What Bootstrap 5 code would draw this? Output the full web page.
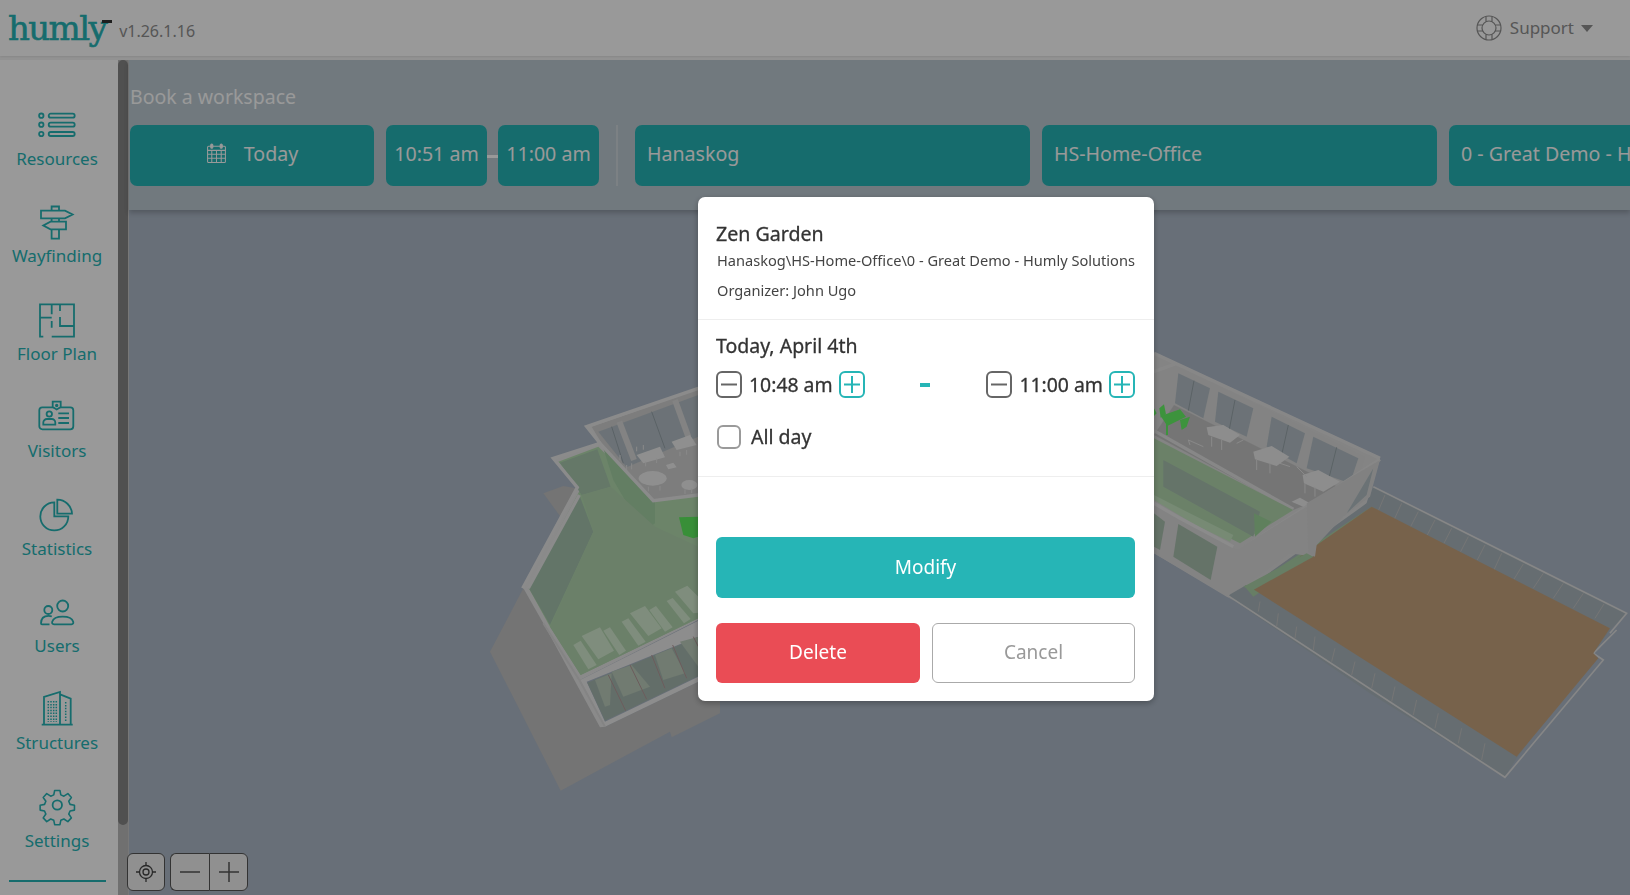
<!DOCTYPE html>
<html lang="en">
<head>
<meta charset="utf-8">
<title>Humly</title>
<link rel="stylesheet" href="https://cdn.jsdelivr.net/npm/bootstrap@5.3.0/dist/css/bootstrap.min.css">
<style>
html,body{height:100%}
body{font-family:"Noto Sans",sans-serif;overflow:hidden;background:#f4f4f4;color:#333}
.app-head{height:56px;background:#fff;margin-bottom:4px;padding:0 37px 0 8px;box-shadow:0 1px 2px rgba(0,0,0,.08)}
.logo-text{font-family:"DejaVu Serif",serif;font-size:34px;line-height:1;color:#26b5b6;letter-spacing:-1.6px;position:relative;-webkit-text-stroke:.6px #26b5b6}
.logo-dash{position:absolute;right:-6px;top:9px;width:10px;height:3px;background:#333}
.ver{font-size:16px;color:#8f8f8f;margin-left:13px;margin-top:5px}
.sup{font-size:17px;color:#8f8f8f}
.sup-caret{width:0;height:0;border-left:6.5px solid transparent;border-right:6.5px solid transparent;border-top:7px solid #8f8f8f;margin-left:7px}
.app-body{height:835px;overflow:hidden}
.side{width:118px;background:#fff;flex:none;overflow:hidden;height:835px;padding:45px 4px 0 0}
.side-item{height:97.4px;flex:none;color:#26b5b6;font-size:17px;line-height:24px;text-decoration:none}
.side-item svg{width:40px;height:40px;display:block;margin:0 auto 2px;stroke:#26b5b6;fill:none;stroke-width:1.8}
.side-rule{width:97px;height:2px;background:#26b5b6;margin:-4px auto 0;flex:none}
.bar-track{width:10px;background:#bbb;flex:none}
.bar-thumb{height:765px;background:#858585;border-radius:5px}
.stage{background:#adb9c8;min-width:0;border-left:1px solid #c9c9c9}
.book{height:150px;background:#bdcad3;padding:24px 0 0 1px;box-shadow:0 3px 5px rgba(0,0,0,.2);position:relative;z-index:2}
.book-title{font-size:19.5px;line-height:26px;color:#fff;margin-bottom:15px}
.pick{background:#26b5b6;color:#fff;border-radius:7px;height:61px;font-size:19.6px;line-height:26px;white-space:nowrap;flex:none;overflow:hidden;padding:0 12px 4px;border:0}
.pick-day{width:244px;text-align:center;padding-left:12px}
.pick-time{width:101px;padding:0 0 4px;text-align:center}
.pick-wide{width:395px;margin-right:12px}
.pick-cal{width:21px;height:21px;margin-right:17px;vertical-align:-3px}
.pick-gap{width:12px;flex:none}
.dash-time{width:11px;height:3px;background:#fff;align-self:center;flex:none;margin-top:1px}
.vrule{width:2px;height:61px;background:#cfd7dd;margin:0 17px 0 17px;flex:none}
.floor{position:absolute;left:0;top:0;width:1630px;height:895px;z-index:1}
.mapctl{position:absolute;left:127px;top:853px;z-index:3;gap:5px}
.mapbtn{width:38px;height:38px;background:#f0f0f0;border:1.5px solid #555;border-radius:6px;padding:0;display:flex;align-items:center;justify-content:center}
.mapgrp .mapbtn{width:39px}
.mapgrp .mapbtn:first-child{border-radius:6px 0 0 6px;border-right:0}
.mapgrp .mapbtn:last-child{border-radius:0 6px 6px 0}
.humly-back{--bs-backdrop-opacity:.4}
.modal.humly-modal{display:block}
.humly-modal .modal-dialog{max-width:456px;margin:197px 0 0 698px}
.humly-modal .modal-content{height:504px;border:0;border-radius:7px;box-shadow:0 2px 6px rgba(0,0,0,.3);color:#333;display:block}
.mhead{height:123px;padding:23px 18px 0;border-bottom:1px solid #eee}
.mtitle{font-size:19.6px;line-height:28px;color:#333;-webkit-text-stroke:.3px #333}
.msub{font-size:14.6px;line-height:20px;color:#444;white-space:nowrap;padding-left:1px;margin-top:2px}
.msub+.msub{margin-top:10px}
.mtime{height:157px;padding:12px 18px 0;border-bottom:1px solid #eee}
.mday{font-size:19.5px;line-height:27px;color:#333;-webkit-text-stroke:.3px #333}
.tline{margin-top:12px;height:27px;padding-right:1px}
.tval{font-size:19.4px;line-height:27px;white-space:nowrap;color:#333;margin-left:7px;margin-right:6px;-webkit-text-stroke:.3px #333}
.tbtn{width:26px;height:27px;border-radius:6px;border:2px solid #666;background:#fff;padding:0;flex:none;display:flex}
.tbtn svg{width:100%;height:100%}
.tbtn.on{border-color:#26b5b6}
.tdash{width:10px;height:4px;background:#26b5b6;flex:none;margin-left:55px}
.tspace{margin-left:auto}
.allday{margin-top:26px}
.allday .form-check-input{width:24px;height:24px;border-radius:6px;border:2px solid #9a9a9a;margin:0 10px 0 1px;float:none;flex:none}
.allday label{font-size:19.5px;line-height:26px;color:#333;-webkit-text-stroke:.3px #333}
.mfoot{padding:60px 19px 0 18px}
.act{height:60px;border-radius:6px;font-size:19px;border:0;color:#fff;padding-bottom:8px}
.act-mod{background:#26b5b6;width:100%;height:61px;margin-bottom:25px;padding-bottom:6px}
.act-del{background:#ea4c55;width:204px}
.act-can{background:#fff;border:1px solid #aaa;color:#999;width:203px}
</style>
</head>
<body>
<header class="app-head d-flex align-items-center">
  <span class="logo-text">humly<span class="logo-dash"></span></span>
  <span class="ver">v1.26.1.16</span>
  <div class="sup ms-auto d-flex align-items-center">
    <svg width="26" height="26" viewBox="0 0 26 26" fill="none" stroke="#8f8f8f" stroke-width="1.2" class="me-2"><circle cx="13" cy="13" r="12"/><circle cx="13" cy="13" r="7"/><path d="M10 1.5v5M16 1.5v5M10 19.5v5M16 19.5v5M1.5 10h5M1.5 16h5M19.5 10h5M19.5 16h5"/></svg>
    <span>Support</span><span class="sup-caret"></span>
  </div>
</header>
<div class="app-body d-flex">
  <nav class="side d-flex flex-column text-center">
    <a class="side-item d-block"><svg viewBox="0 0 40 40"><circle cx="4.3" cy="10.7" r="2.2"/><circle cx="4.3" cy="19.7" r="2.2"/><circle cx="4.3" cy="29" r="2.2"/><rect x="11.7" y="8.7" width="26" height="4" rx="2"/><rect x="11.7" y="17.7" width="26" height="4" rx="2"/><rect x="11.7" y="27" width="26" height="4" rx="2"/></svg>Resources</a>
    <a class="side-item d-block"><svg viewBox="0 0 40 40"><path d="M14.6 8.6V4.5h7.4v4.1M4 8.6h24l7.6 3.9-7.6 3.8H4zM14.6 16.3v3.4M22 16.3v3.4M29 19.7H13.5l-7.2 3.8 7.2 3.8H29zM14.6 27.3v9.4H22v-9.4"/></svg>Wayfinding</a>
    <a class="side-item d-block"><svg viewBox="0 0 40 40" stroke-width="2"><path d="M6.3 36.7H3V4.3h34v32.400H14.7M14.7 4.300v10M3 17.700h11.700M14.700 21v6.700M23 4.300V11M23 17v9h14"/></svg>Floor Plan</a>
    <a class="side-item d-block"><svg viewBox="0 0 40 40"><rect x="2.3" y="10.3" width="34" height="22" rx="3"/><path d="M15.7 4.7h8V10l-4 2.5-4-2.5z" fill="#fff"/><circle cx="19.7" cy="8.5" r=".8"/><circle cx="12.3" cy="17" r="2.7"/><path d="M6.3 27.7v-2.2c0-2 2-3.500 3.500-3.500h5c1.700 0 3.500 1.500 3.500 3.500v2.200zM21.300 16.300H32M21.300 21H32M21.300 26H32"/></svg>Visitors</a>
    <a class="side-item d-block"><svg viewBox="0 0 40 40"><path d="M17.300 7.400A14 14 0 1 0 31.300 21.400H17.300zM20.300 4.700V18.700H35A14.700 14.700 0 0 0 20.300 4.700z"/></svg>Statistics</a>
    <a class="side-item d-block"><svg viewBox="0 0 40 40"><circle cx="25.700" cy="14" r="5.500"/><path d="M17 32.300h17.500c1.500 0 2.100-1 1.700-2.500-1-3.500-5-5.100-10.500-5.100s-9.500 1.600-10.500 5.100c-.4 1.500.1 2.500 1.800 2.500z"/><circle cx="11.300" cy="18" r="4"/><path d="M4 31.300c0-4.800 3-7.500 7.500-7.500 1.300 0 2.400.2 3.300.7M4 31.300c0 .6.400 1 1 1h7.500"/></svg>Users</a>
    <a class="side-item d-block"><svg viewBox="0 0 40 40"><path d="M4.700 35.600h31M7 35.600V7.900l16-5v32.700M23.700 5.600l10 4v26"/><path d="M11.300 12v21M14 12v21M16.700 12v21M19.300 12v21M28.700 13v19" stroke-width="1.500" stroke-dasharray="1.500 1.400"/></svg>Structures</a>
    <a class="side-item d-block"><svg viewBox="0 0 40 40"><circle cx="20.300" cy="18" r="4.700"/><path d="M17 3.500h6l1 5 3.500 1.500 4.500-3 4 4.500-3 4.300 1.500 3.500 5 .9v5.600l-5 1-1.500 3.500 3 4.300-4 4.300-4.500-3-3.500 1.500-1 5h-6l-1-5-3.500-1.500-4.500 3-4-4.300 3-4.300-1.500-3.500-5-1v-5.600l5-.9 1.500-3.500-3-4.300 4-4.500 4.500 3 3.500-1.500z" transform="translate(2.700 .4) scale(.88)" stroke-linejoin="round"/></svg>Settings</a>
    <div class="side-rule"></div>
  </nav>
  <div class="bar-track"><div class="bar-thumb"></div></div>
  <main class="stage flex-grow-1">
    <section class="book">
      <div class="book-title">Book a workspace</div>
      <div class="d-flex">
        <button class="pick pick-day"><svg class="pick-cal" viewBox="0 0 20 20" fill="none" stroke="#fff" stroke-width="1"><rect x="1.500" y="3" width="17" height="15.500" rx="1"/><path d="M1.500 7h17M1.500 10.700h17M1.500 14.500h17M5.500 7v11.500M10 7v11.500M14.500 7v11.500"/><rect x="4.500" y="1" width="2" height="4" rx="1" fill="#fff"/><rect x="13.500" y="1" width="2" height="4" rx="1" fill="#fff"/></svg>Today</button>
        <span class="pick-gap"></span>
        <button class="pick pick-time">10:51 am</button>
        <span class="dash-time"></span>
        <button class="pick pick-time">11:00 am</button>
        <span class="vrule"></span>
        <button class="pick pick-wide text-start">Hanaskog</button>
        <button class="pick pick-wide text-start">HS-Home-Office</button>
        <button class="pick pick-wide text-start">0 - Great Demo - Humly Solutions</button>
      </div>
    </section>
  </main>
</div>

<svg class="floor" viewBox="0 0 1630 895" aria-hidden="true">
  <g transform="translate(480 380) scale(.3333)">
    <polygon points="190,340 250,318 290,325 245,415" fill="#c1c1c1"/>
    <polygon points="30,815 130,625 300,885 375,1040 655,905 720,860 720,1000 575,1072 570,1055 242,1232" fill="#c1c1c1"/>
    <polygon points="130,625 292,322 220,235 360,190 320,140 655,25 655,345 520,365 655,345 655,720 300,900 375,1040 360,1042 190,730" fill="#e6e6e6"/>
    <polygon points="145,622 300,330 235,245 355,200 520,365 655,345 655,715 302,885 210,740" fill="#b4dcb0"/>
    <polygon points="145,622 298,345 340,455 210,735" fill="#a6c4ae"/>
    <polygon points="240,248 352,208 392,320 305,345" fill="#a8c8ae"/>
    <polygon points="370,205 525,365 525,430 490,455 400,300" fill="#a5d2a5"/>
    <polygon points="305,345 392,320 525,440 655,500 655,715 302,885 210,740 340,455" fill="#b3d5b0"/>
    <polygon points="597,412 655,410 655,470 640,475 610,465" fill="#5eee5e"/>
    <g fill="#d4ecd0">
      <polygon points="280,795 302,782 350,855 325,868"/><polygon points="305,768 360,742 402,812 355,838"/><polygon points="370,752 390,742 438,812 418,825"/>
      <polygon points="425,725 445,715 497,785 475,797"/><polygon points="450,700 495,678 545,745 505,768"/><polygon points="508,690 528,678 578,742 555,755"/>
      <polygon points="560,663 578,654 632,717 612,730"/><polygon points="585,635 622,617 655,650 655,698 640,700"/>
    </g>
    <polygon points="335,140 655,28 655,345 520,362 365,190" fill="#d0d0d0"/>
    <polygon points="355,155 655,45 655,170 440,262" fill="#b4bfc6"/>
    <g stroke="#dadada" stroke-width="18"><path d="M418 125 462 240M585 60 625 170"/></g>
    <g stroke="#97a3aa" stroke-width="3"><path d="M395 140 430 250M515 95 555 205"/></g>
    <g fill="#efefef">
      <polygon points="470,225 540,200 555,232 490,250"/><ellipse cx="518" cy="295" rx="42" ry="22"/><ellipse cx="628" cy="315" rx="24" ry="15"/><polygon points="575,185 630,165 650,195 590,210"/><polygon points="558,255 580,248 590,262 565,268"/>
    </g>
    <g stroke="#e6e6e6" stroke-width="3" fill="none"><path d="M440 255v18M455 250v18M497 245v14M530 235v14M600 215v14M620 210v14M470 200v14M490 195v14M505 320v14M540 318v14M615 328v14M635 325v14M420 225v16"/></g>
    <path d="M128 625 292 322 220 235 360 190 320 140 655 25M360 190 520 362 655 345M145 625 298 345" fill="none" stroke="#e8e8e8" stroke-width="10"/>
    <polygon points="300,900 655,722 655,770 320,905 375,1025 655,890 655,905 375,1040" fill="#ececec"/>
    <polygon points="322,908 655,772 655,888 375,1022" fill="#a6b8b0"/>
    <g fill="#bccdbc"><polygon points="345,900 395,880 390,975 375,980"/><polygon points="395,875 455,855 510,920 430,950"/><polygon points="525,825 575,805 615,880 550,900"/><polygon points="600,785 655,770 655,860"/></g>
    <g stroke="#b59a9a" stroke-width="3" fill="none"><path d="M385 885 437 992M450 855 500 958M515 825 555 925M578 795 620 895M640 770 655 800"/></g>
    <path d="M190 730 298 900 375 1040" fill="none" stroke="#dcdcdc" stroke-width="6"/>
  </g>
  <g transform="translate(1140 340) scale(.3333)">
    <polygon points="42,40 720,355 680,490 530,640 300,790 260,770 42,640" fill="#dcdcdc"/>
    <polygon points="42,95 105,75 675,350 642,465 460,505 42,285" fill="#dadada"/>
    <polygon points="42,285 102,195 642,465 660,440 510,490 460,510" fill="#c4c4c4"/>
    <g fill="#b4bfc6">
      <polygon points="115,100 210,145 190,235 105,190"/><polygon points="235,155 340,205 320,290 225,245"/><polygon points="395,230 495,280 470,370 380,320"/><polygon points="520,290 655,355 630,430 500,385"/>
    </g>
    <g stroke="#98a4aa" stroke-width="3"><path d="M162 122 145 212M285 180 268 268M445 255 425 345M590 322 568 410"/></g>
    <g stroke="#e2e2e2" stroke-width="10"><path d="M42 40 720 355M42 95 105 72M720 358 300 630M42 272 460 508"/></g>
    <polygon points="42,295 460,510 300,610 42,480" fill="#b3d8ae"/>
    <polygon points="70,360 360,515 340,590 70,440" fill="#a8c2b0"/>
    <polygon points="342,520 395,545 345,590" fill="#9fd69c"/>
    <polygon points="42,465 130,510 280,585 270,605 135,540 42,485" fill="#c6e6c2"/>
    <g fill="#ececec"><polygon points="200,262 250,255 300,285 270,308 205,285"/><polygon points="340,335 395,318 448,350 410,378 345,358"/><polygon points="488,405 535,390 600,425 550,455 492,430"/><polygon points="455,485 480,473 510,490 490,500"/></g>
    <g stroke="#e4e4e4" stroke-width="3" fill="none"><path d="M145 300l45 20M150 315l-5-15M420 370l30 10M470 380l30 30M290 310l20-10M215 290v30M245 300v30M350 360v30M390 370v30M495 430v30M525 440v30"/></g>
    <g fill="#66f566"><polygon points="62,228 120,208 138,230 82,258"/><path d="M58 205l14-12 6 30-16 10zM42 205l8 15-8 8zM120 240l30-10-10 30-15 10z"/><path d="M78 250h6v35h-6z"/></g>
    <polygon points="700,440 1460,820 1410,870 1130,1255 1095,1310 1020,1265 690,1060 265,770 275,720 330,740 680,490" fill="#aab6bc"/>
    <polygon points="330,740 695,500 720,515 340,770 310,735" fill="#acd2a8"/>
    <path d="M700 440 1460 820 1410 880M1430 870 1360 940 1390 960 1095 1312 265 768 275 718" fill="none" stroke="#dfdfdf" stroke-width="5"/>
    <g stroke="#c4c4c4" stroke-width="3" fill="none"><path d="M735 465 712 520M785 490 762 540M835 515 812 560M885 540 862 585M935 565 912 610M985 590 962 635M1035 615 1012 660M1085 640 1062 690M1150 672 1122 718M1210 700 1180 745M1270 730 1240 775M1330 760 1300 805M1392 792 1365 835M360 785 355 815M415 820 410 860M470 860 465 895M525 890 520 930M585 925 575 965M645 965 635 1005M705 1000 695 1045M765 1040 755 1085M830 1080 820 1125M895 1120 885 1165M965 1165 955 1210M1035 1210 1025 1260"/></g>
    <polygon points="340,748 695,500 1410,865 1360,940 1375,955 1130,1250" fill="#c6a47e"/>
    <polygon points="42,640 42,480 290,630 500,500 530,520 520,650 450,640 310,740 262,768" fill="#dadada"/>
    <polygon points="500,490 660,395 720,360 690,470 610,530 530,615 525,650 505,640" fill="#d8d8d8"/>
    <polygon points="620,520 700,385 680,465" fill="#b2bfc4"/>
    <polygon points="115,552 232,620 212,720 100,650" fill="#a9c0ae"/>
    <polygon points="42,520 75,545 60,630 42,620" fill="#a9c0ae"/>
    <path d="M42 490 120 535 280 620" stroke="#e8e8e8" stroke-width="10" fill="none"/>
    <polygon points="310,740 500,640 520,650 340,750" fill="#acd2a8"/>
  </g>
</svg>

<div class="mapctl d-flex">
  <button class="mapbtn" aria-label="Locate"><svg width="24" height="24" viewBox="0 0 24 24" fill="none" stroke="#444" stroke-width="1.300"><circle cx="12" cy="12" r="6.500"/><circle cx="12" cy="12" r="3"/><path d="M12 2v3.500M12 18.500V22M2 12h3.500M18.500 12H22"/></svg></button>
  <div class="mapgrp d-flex">
    <button class="mapbtn" aria-label="Zoom out"><svg width="22" height="22" viewBox="0 0 22 22" stroke="#555" stroke-width="1.500"><path d="M1 11h20"/></svg></button>
    <button class="mapbtn" aria-label="Zoom in"><svg width="22" height="22" viewBox="0 0 22 22" stroke="#555" stroke-width="1.500"><path d="M1 11h20M11 1v20"/></svg></button>
  </div>
</div>

<div class="modal-backdrop show humly-back"></div>
<div class="modal humly-modal" tabindex="-1">
  <div class="modal-dialog">
    <div class="modal-content">
      <div class="mhead">
        <div class="mtitle">Zen Garden</div>
        <div class="msub">Hanaskog\HS-Home-Office\0 - Great Demo - Humly Solutions</div>
        <div class="msub">Organizer: John Ugo</div>
      </div>
      <div class="mtime">
        <div class="mday">Today, April 4th</div>
        <div class="tline d-flex align-items-center">
          <button class="tbtn" aria-label="Minus"><svg viewBox="0 0 22 23" stroke="#666" stroke-width="2"><path d="M3 11.500h16"/></svg></button>
          <span class="tval">10:48 am</span>
          <button class="tbtn on" aria-label="Plus"><svg viewBox="0 0 22 23" stroke="#26b5b6" stroke-width="2"><path d="M3 11.500h16M11 3v17"/></svg></button>
          <span class="tdash"></span>
          <button class="tbtn tspace" aria-label="Minus"><svg viewBox="0 0 22 23" stroke="#666" stroke-width="2"><path d="M3 11.500h16"/></svg></button>
          <span class="tval">11:00 am</span>
          <button class="tbtn on" aria-label="Plus"><svg viewBox="0 0 22 23" stroke="#26b5b6" stroke-width="2"><path d="M3 11.500h16M11 3v17"/></svg></button>
        </div>
        <div class="allday d-flex align-items-center">
          <input class="form-check-input" type="checkbox" id="allDay">
          <label for="allDay">All day</label>
        </div>
      </div>
      <div class="mfoot">
        <button class="btn act act-mod d-block">Modify</button>
        <div class="d-flex justify-content-between">
          <button class="btn act act-del">Delete</button>
          <button class="btn act act-can">Cancel</button>
        </div>
      </div>
    </div>
  </div>
</div>
<script src="https://cdn.jsdelivr.net/npm/bootstrap@5.3.0/dist/js/bootstrap.bundle.min.js"></script>
</body>
</html>
